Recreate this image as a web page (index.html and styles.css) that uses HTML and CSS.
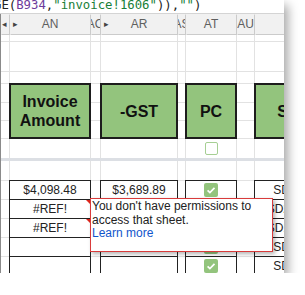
FILE: index.html
```html
<!DOCTYPE html>
<html lang="en">
<head>
  <meta charset="UTF-8">
  <meta name="viewport" content="width=device-width, initial-scale=1.0">
  <title>Invoices</title>
  <link rel="stylesheet" href="styles.css">
</head>
<body>
  <div class="window">
    <div class="formula">GE(<span class="ref">B934</span>,<span class="str">"invoice!1606"</span>)),<span class="str">""</span>)</div>

    <div class="sheet">
      <!-- column headers -->
      <div class="colhead"><span class="mark">◂</span></div>
      <div class="colhead"><span class="mark next">▸</span>AN</div>
      <div class="colhead">AO</div>
      <div class="colhead"><span class="mark next">▸</span>AR</div>
      <div class="colhead">AS</div>
      <div class="colhead">AT</div>
      <div class="colhead">AU</div>
      <div class="colhead">AV</div>

      <div></div><div></div><div></div><div></div><div></div><div></div><div></div><div></div>
      <div></div><div></div><div></div><div></div><div></div><div></div><div></div><div></div>
      <div></div><div></div><div></div><div></div><div></div><div></div><div></div><div></div>

      <!-- merged title cells -->
      <div></div>
      <div class="head">Invoice<br>Amount</div>
      <div></div>
      <div class="head">-GST</div>
      <div></div>
      <div class="head">PC</div>
      <div></div>
      <div class="head">SD #</div>
      <div></div><div></div><div></div><div></div>
      <div></div><div></div><div></div><div></div>

      <div></div><div></div><div></div><div></div><div></div>
      <div class="cell"><span class="tick off"></span></div>
      <div></div><div></div>

      <div class="freeze"></div>

      <div></div><div></div><div></div><div></div><div></div><div></div><div></div><div></div>

      <!-- data -->
      <div></div>
      <div class="box">$4,098.48</div>
      <div></div>
      <div class="box">$3,689.89</div>
      <div></div>
      <div class="box"><span class="tick"><svg viewBox="0 0 14 14" width="14" height="14"><path d="M3.6 7.3l2.3 2.3 4.6-4.7" fill="none" stroke="#fff" stroke-width="1.7"/></svg></span></div>
      <div></div>
      <div class="box">SD1014</div>

      <div></div>
      <div class="box err">#REF!</div>
      <div></div>
      <div class="box"></div>
      <div></div>
      <div class="box"><span class="tick"><svg viewBox="0 0 14 14" width="14" height="14"><path d="M3.6 7.3l2.3 2.3 4.6-4.7" fill="none" stroke="#fff" stroke-width="1.7"/></svg></span></div>
      <div></div>
      <div class="box">SD201608</div>

      <div></div>
      <div class="box err">#REF!</div>
      <div></div>
      <div class="box"></div>
      <div></div>
      <div class="box"><span class="tick"><svg viewBox="0 0 14 14" width="14" height="14"><path d="M3.6 7.3l2.3 2.3 4.6-4.7" fill="none" stroke="#fff" stroke-width="1.7"/></svg></span></div>
      <div></div>
      <div class="box">SD101625</div>

      <div></div>
      <div class="box"></div>
      <div></div>
      <div class="box"></div>
      <div></div>
      <div class="box"><span class="tick"><svg viewBox="0 0 14 14" width="14" height="14"><path d="M3.6 7.3l2.3 2.3 4.6-4.7" fill="none" stroke="#fff" stroke-width="1.7"/></svg></span></div>
      <div></div>
      <div class="box">SD1019</div>

      <div></div>
      <div class="box"></div>
      <div></div>
      <div class="box"></div>
      <div></div>
      <div class="box"><span class="tick"><svg viewBox="0 0 14 14" width="14" height="14"><path d="M3.6 7.3l2.3 2.3 4.6-4.7" fill="none" stroke="#fff" stroke-width="1.7"/></svg></span></div>
      <div></div>
      <div class="box">SD1020</div>
    </div>

    <div class="tip">
      You don't have permissions to<br>
      access that sheet.<br>
      <a href="#">Learn more</a>
    </div>
  </div>
</body>
</html>
```

FILE: styles.css
```css
/* okno arkusza z cieniem */
body {
  margin: 0;
  background: #fff;
  font-family: "Liberation Sans", Arial, sans-serif;
  overflow: hidden;
}
.window {
  position: relative;
  width: 284px;
  height: 273px;
  overflow: hidden;
  background: #fff;
  box-shadow: 4px 5px 10px rgba(0, 0, 0, 0.35);
}
.formula {
  height: 13px;
  border-bottom: 1px solid #d4d4d4;
  font-family: "DejaVu Sans Mono", monospace;
  font-size: 12.3px;
  line-height: 11px;
  white-space: nowrap;
  text-indent: -6px;
  color: #222;
  overflow: hidden;
}
.ref {
  color: #6d3b9c;
}
.str {
  color: #188038;
}

/* siatka komórek */
.sheet {
  display: grid;
  grid-template-columns: 8px 80px 9px 76px 7px 50px 17px 80px;
  grid-template-rows: 20px 6px 29px 11px 18px 17px 17px 19px 1px 19px repeat(5, 18px);
  gap: 1px;
  background: #e2e2e2;
  border-left: 1px solid #8a8a8a;
}
.sheet > div {
  background: #fff;
  min-width: 0;
}
.sheet .colhead {
  position: relative;
  display: flex;
  justify-content: center;
  background: #f1f1f1;
  box-shadow: 1px 1px 0 #cbcbcb;
  font-size: 12px;
  line-height: 20px;
  color: #5f5f5f;
  overflow: hidden;
  white-space: nowrap;
}
.mark {
  position: absolute;
  right: 2px;
  font-size: 9px;
  color: #444;
}
.mark.next {
  right: auto;
  left: 3px;
}
.sheet .head {
  grid-row: span 3;
  margin: -1px;
  border: 2px solid #1d1d1d;
  background: #93c47d;
  display: flex;
  align-items: center;
  justify-content: center;
  text-align: center;
  font-weight: bold;
  font-size: 16px;
  line-height: 19px;
  color: #111;
  white-space: nowrap;
  overflow: hidden;
}
.sheet .freeze {
  grid-column: 1 / -1;
  margin: -1px 0;
  background: #dcdfe4;
}
.sheet .cell {
  display: flex;
  align-items: center;
  justify-content: center;
}
.sheet .box {
  position: relative;
  margin: -1px;
  border: 1px solid #222;
  display: flex;
  align-items: center;
  justify-content: center;
  font-size: 12px;
  color: #222;
  white-space: nowrap;
  overflow: hidden;
}
.err::after {
  content: "";
  position: absolute;
  top: 0;
  right: 0;
  border-top: 4px solid #e0241b;
  border-left: 4px solid transparent;
}
.tick {
  display: block;
  width: 14px;
  height: 14px;
  border-radius: 2px;
  background: #93c47d;
}
.tick svg {
  display: block;
}
.tick.off {
  width: 13px;
  height: 13px;
  box-sizing: border-box;
  border: 1.5px solid #a6cf93;
  background: #fff;
}

/* dymek z błędem */
.tip {
  position: absolute;
  left: 90px;
  top: 198px;
  width: 183px;
  height: 54px;
  box-sizing: border-box;
  padding: 1px 0 0 1px;
  border: 1px solid #d93b3b;
  background: #fff;
  box-shadow: 2px 2px 4px rgba(0, 0, 0, 0.3);
  font-size: 12px;
  line-height: 13.5px;
  color: #222;
}
.tip a {
  color: #1155cc;
  text-decoration: none;
}
```
